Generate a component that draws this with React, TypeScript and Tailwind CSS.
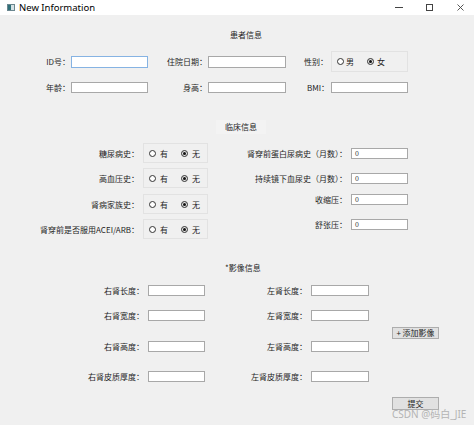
import React from "react";

function Label({ w, children }: { w: string; children: React.ReactNode }) {
  return <div className={`${w} shrink-0 text-right whitespace-nowrap`}>{children}</div>;
}

function Radio({ checked, label, gap }: { checked?: boolean; label: string; gap: string }) {
  return (
    <span className="flex items-center">
      <span
        className={`w-[7px] h-[7px] rounded-full border border-[#333333] flex items-center justify-center ${
          checked ? "bg-[#e4e4e4]" : "bg-white"
        }`}
      >
        {checked && <span className="w-[3px] h-[3px] rounded-full bg-[#111111]" />}
      </span>
      <span className={gap}>{label}</span>
    </span>
  );
}

function Field({ w, h, value }: { w: string; h: string; value?: string }) {
  return (
    <div
      className={`${w} ${h} ml-[4px] shrink-0 bg-white border border-[#a8a8a8] text-[7px] leading-[9px] pl-[3px] text-[#333333]`}
    >
      {value}
    </div>
  );
}

function YesNo() {
  return (
    <div className="ml-[4px] w-[65px] h-[20px] border border-[#e2e2e2] flex items-center pl-[5px]">
      <Radio label="有" gap="ml-[4px]" />
      <span className="ml-[13px]">
        <Radio checked label="无" gap="ml-[4px]" />
      </span>
    </div>
  );
}

export default function App() {
  return (
    <div className="w-[474px] h-[425px] bg-[#f0f0f0] relative overflow-hidden font-['Noto_Sans_CJK_SC','Noto_Sans',sans-serif] text-[8px] leading-[11px] text-[#1e1e1e]">
      {/* Title bar */}
      <div className="h-[15px] bg-white flex items-center">
        <svg className="ml-[7px]" width="8" height="7" viewBox="0 0 8 7">
          <rect x="0.5" y="0.5" width="7" height="6" fill="#d6e2e6" stroke="#6b8790" />
          <rect x="1" y="1" width="3" height="5" fill="#2f6f78" />
        </svg>
        <span className="ml-[4px] font-['Noto_Sans',sans-serif] text-[9.5px] leading-[15px] text-black">
          New Information
        </span>
        <div className="ml-auto flex items-center mr-[10px]">
          <span className="w-[8px] h-px bg-[#444444]" />
          <span className="ml-[23px] w-[7px] h-[7px] border border-[#444444]" />
          <svg className="ml-[24px]" width="7" height="7" viewBox="0 0 7 7">
            <path d="M0.5 0.5 L6.5 6.5 M6.5 0.5 L0.5 6.5" stroke="#444444" strokeWidth="0.9" />
          </svg>
        </div>
      </div>

      {/* 患者信息 */}
      <div className="mt-[14px] h-[11px] pl-[230px]">患者信息</div>

      <div className="mt-[11px] h-[21px] flex items-center">
        <Label w="w-[70px]">ID号：</Label>
        <div className="ml-[1px] w-[77px] h-[12px] shrink-0 bg-white border border-[#86b3e3]" />
        <Label w="w-[59px]">住院日期：</Label>
        <div className="ml-[1px] w-[78px] h-[12px] shrink-0 bg-white border border-[#a8a8a8]" />
        <Label w="w-[42px]">性别：</Label>
        <div className="ml-[3px] w-[77px] h-[21px] shrink-0 border border-[#e2e2e2] flex items-center pl-[5px]">
          <Radio label="男" gap="ml-[2px]" />
          <span className="ml-[13px]">
            <Radio checked label="女" gap="ml-[3px]" />
          </span>
        </div>
      </div>

      <div className="mt-[10px] h-[11px] flex items-center">
        <Label w="w-[70px]">年龄：</Label>
        <div className="ml-[1px] w-[77px] h-[11px] shrink-0 bg-white border border-[#a8a8a8]" />
        <Label w="w-[59px]">身高：</Label>
        <div className="ml-[1px] w-[78px] h-[11px] shrink-0 bg-white border border-[#a8a8a8]" />
        <Label w="w-[43px]">BMI：</Label>
        <div className="ml-[2px] w-[77px] h-[11px] shrink-0 bg-white border border-[#a8a8a8]" />
      </div>

      {/* 临床信息 */}
      <div className="mt-[27px] h-[14px] pl-[216px] flex">
        <span className="px-[9px] bg-[#f3f3f3] leading-[14px]">临床信息</span>
      </div>

      <div className="mt-[9px] flex items-start">
        <div className="flex flex-col">
          <div className="h-[20px] flex items-center">
            <Label w="w-[139px]">糖尿病史：</Label>
            <YesNo />
          </div>
          <div className="mt-[5px] h-[20px] flex items-center">
            <Label w="w-[139px]">高血压史：</Label>
            <YesNo />
          </div>
          <div className="mt-[6px] h-[20px] flex items-center">
            <Label w="w-[139px]">肾病家族史：</Label>
            <YesNo />
          </div>
          <div className="mt-[5px] h-[20px] flex items-center">
            <Label w="w-[139px]">肾穿前是否服用ACEI/ARB：</Label>
            <YesNo />
          </div>
        </div>
        <div className="flex flex-col pt-[5px]">
          <div className="h-[11px] flex items-center">
            <Label w="w-[139px]">肾穿前蛋白尿病史（月数）：</Label>
            <Field w="w-[57px]" h="h-[11px]" value="0" />
          </div>
          <div className="mt-[14px] h-[11px] flex items-center">
            <Label w="w-[139px]">持续镜下血尿史（月数）：</Label>
            <Field w="w-[57px]" h="h-[11px]" value="0" />
          </div>
          <div className="mt-[10px] h-[11px] flex items-center">
            <Label w="w-[139px]">收缩压：</Label>
            <Field w="w-[57px]" h="h-[11px]" value="0" />
          </div>
          <div className="mt-[14px] h-[11px] flex items-center">
            <Label w="w-[139px]">舒张压：</Label>
            <Field w="w-[57px]" h="h-[11px]" value="0" />
          </div>
        </div>
      </div>

      {/* 影像信息 */}
      <div className="mt-[22px] h-[14px] leading-[14px] pl-[225px]">*影像信息</div>

      <div className="mt-[10px] flex items-start">
        <div className="flex flex-col">
          <div className="h-[11px] flex items-center">
            <Label w="w-[144px]">右肾长度：</Label>
            <Field w="w-[57px]" h="h-[11px]" />
          </div>
          <div className="mt-[14px] h-[11px] flex items-center">
            <Label w="w-[144px]">右肾宽度：</Label>
            <Field w="w-[57px]" h="h-[11px]" />
          </div>
          <div className="mt-[20px] h-[11px] flex items-center">
            <Label w="w-[144px]">右肾高度：</Label>
            <Field w="w-[57px]" h="h-[11px]" />
          </div>
          <div className="mt-[19px] h-[11px] flex items-center">
            <Label w="w-[144px]">右肾皮质厚度：</Label>
            <Field w="w-[57px]" h="h-[11px]" />
          </div>
        </div>
        <div className="flex flex-col">
          <div className="h-[11px] flex items-center">
            <Label w="w-[102px]">左肾长度：</Label>
            <Field w="w-[58px]" h="h-[11px]" />
          </div>
          <div className="mt-[14px] h-[11px] flex items-center">
            <Label w="w-[102px]">左肾宽度：</Label>
            <Field w="w-[58px]" h="h-[11px]" />
          </div>
          <div className="mt-[20px] h-[11px] flex items-center">
            <Label w="w-[102px]">左肾高度：</Label>
            <Field w="w-[58px]" h="h-[11px]" />
          </div>
          <div className="mt-[19px] h-[11px] flex items-center">
            <Label w="w-[102px]">左肾皮质厚度：</Label>
            <Field w="w-[58px]" h="h-[11px]" />
          </div>
        </div>
        <div className="ml-[23px] flex flex-col pt-[42px]">
          <div className="w-[47px] h-[12px] bg-[#e1e1e1] border border-[#adadad] flex items-center justify-center whitespace-nowrap leading-[10px]">
            + 添加影像
          </div>
          <div className="mt-[58px] w-[47px] h-[13px] bg-[#e1e1e1] border border-[#adadad] flex items-center justify-center leading-[11px]">
            提交
          </div>
        </div>
      </div>

      <div className="absolute left-[392px] top-[408px] text-[10px] leading-[12px] text-[#b4b4b4] font-['Noto_Sans','Noto_Sans_CJK_SC',sans-serif] whitespace-nowrap">
        CSDN @码白_JIE
      </div>
    </div>
  );
}
